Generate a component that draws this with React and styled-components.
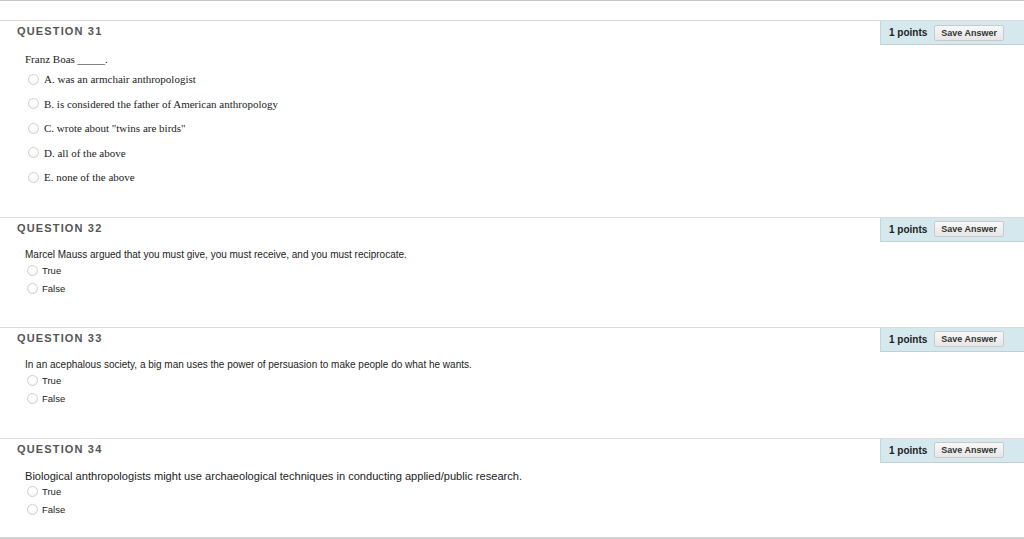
import React from "react";
import styled, { createGlobalStyle } from "styled-components";

const Global = createGlobalStyle`
  html, body { margin: 0; padding: 0; background: #fff; }
  body { font-family: "Liberation Sans", Arial, Helvetica, sans-serif; color: #222; }
`;

const Page = styled.div`
  width: 1024px;
  border-top: 1px solid #c4c4c4;
  padding-top: 19px;
  border-bottom: 2px solid #d2d2d2;
  box-sizing: border-box;
`;

const Section = styled.section`
  border-top: 1px solid #dcdcdc;
  padding-bottom: ${(p) => p.$pb}px;
`;

const Header = styled.div`
  display: flex;
  justify-content: space-between;
  align-items: flex-start;
  height: 24px;
`;

const Title = styled.h3`
  margin: 0;
  padding-left: 17px;
  font-size: 11px;
  line-height: 21px;
  font-weight: bold;
  letter-spacing: 1.15px;
  color: #555;
`;

const PointsBox = styled.div`
  width: 144px;
  height: 24px;
  box-sizing: border-box;
  display: flex;
  align-items: center;
  gap: 7px;
  padding-left: 8px;
  background: #d4e8ee;
  border-left: 1px solid #c3d6db;
  border-bottom: 1px solid #bfd1d6;
`;

const Points = styled.span`
  font-size: 10px;
  font-weight: bold;
  color: #222;
`;

const SaveButton = styled.button`
  height: 16px;
  padding: 0 6px;
  margin: 0;
  font-family: "Liberation Sans", Arial, sans-serif;
  font-size: 9px;
  font-weight: bold;
  color: #333;
  background: linear-gradient(#f8f8f8, #e6e6e6);
  border: 1px solid #cacaca;
  border-radius: 2px;
  line-height: 14px;
`;

const Body = styled.div`
  padding-left: 25px;
  margin-top: 6px;
`;

const Prompt = styled.p`
  margin: 0;
  font-family: ${(p) => (p.$serif ? '"Liberation Serif", "Times New Roman", serif' : '"Liberation Sans", Arial, sans-serif')};
  font-size: ${(p) => p.$size}px;
  line-height: ${(p) => (p.$serif ? 16 : 14)}px;
  color: #222;
`;

const Options = styled.ul`
  list-style: none;
  margin: 0;
  padding: 0;
`;

const Option = styled.li`
  display: flex;
  align-items: center;
  height: ${(p) => (p.$serif ? 24.5 : 18)}px;
  padding-left: ${(p) => (p.$serif ? 3 : 2)}px;
  gap: ${(p) => (p.$serif ? 5 : 4)}px;
  font-family: ${(p) => (p.$serif ? '"Liberation Serif", "Times New Roman", serif' : '"Liberation Sans", Arial, sans-serif')};
  font-size: ${(p) => (p.$serif ? 11 : 9.5)}px;
  color: #222;
`;

const Radio = styled.span`
  display: inline-block;
  width: 11px;
  height: 11px;
  box-sizing: border-box;
  border-radius: 50%;
  border: 1px solid #cfcfcf;
  background: radial-gradient(circle at 50% 35%, #ffffff 40%, #f0f0f0 100%);
  flex: none;
`;

const questions = [
  {
    n: 31,
    serif: true,
    size: 11,
    pb: 27,
    text: "Franz Boas _____.",
    options: [
      "A. was an armchair anthropologist",
      "B. is considered the father of American anthropology",
      'C. wrote about "twins are birds"',
      "D. all of the above",
      "E. none of the above",
    ],
  },
  {
    n: 32,
    size: 10,
    pb: 29,
    text: "Marcel Mauss argued that you must give, you must receive, and you must reciprocate.",
    options: ["True", "False"],
  },
  {
    n: 33,
    size: 10,
    pb: 30,
    text: "In an acephalous society, a big man uses the power of persuasion to make people do what he wants.",
    options: ["True", "False"],
  },
  {
    n: 34,
    size: 11.1,
    pb: 18,
    text: "Biological anthropologists might use archaeological techniques in conducting applied/public research.",
    options: ["True", "False"],
  },
];

export default function App() {
  return (
    <>
      <Global />
      <Page>
        {questions.map((q) => (
          <Section key={q.n} $pb={q.pb}>
            <Header>
              <Title>QUESTION {q.n}</Title>
              <PointsBox>
                <Points>1 points</Points>
                <SaveButton type="button">Save Answer</SaveButton>
              </PointsBox>
            </Header>
            <Body>
              <Prompt $serif={q.serif} $size={q.size}>{q.text}</Prompt>
              <Options>
                {q.options.map((o) => (
                  <Option key={o} $serif={q.serif}>
                    <Radio />
                    <span>{o}</span>
                  </Option>
                ))}
              </Options>
            </Body>
          </Section>
        ))}
      </Page>
    </>
  );
}
